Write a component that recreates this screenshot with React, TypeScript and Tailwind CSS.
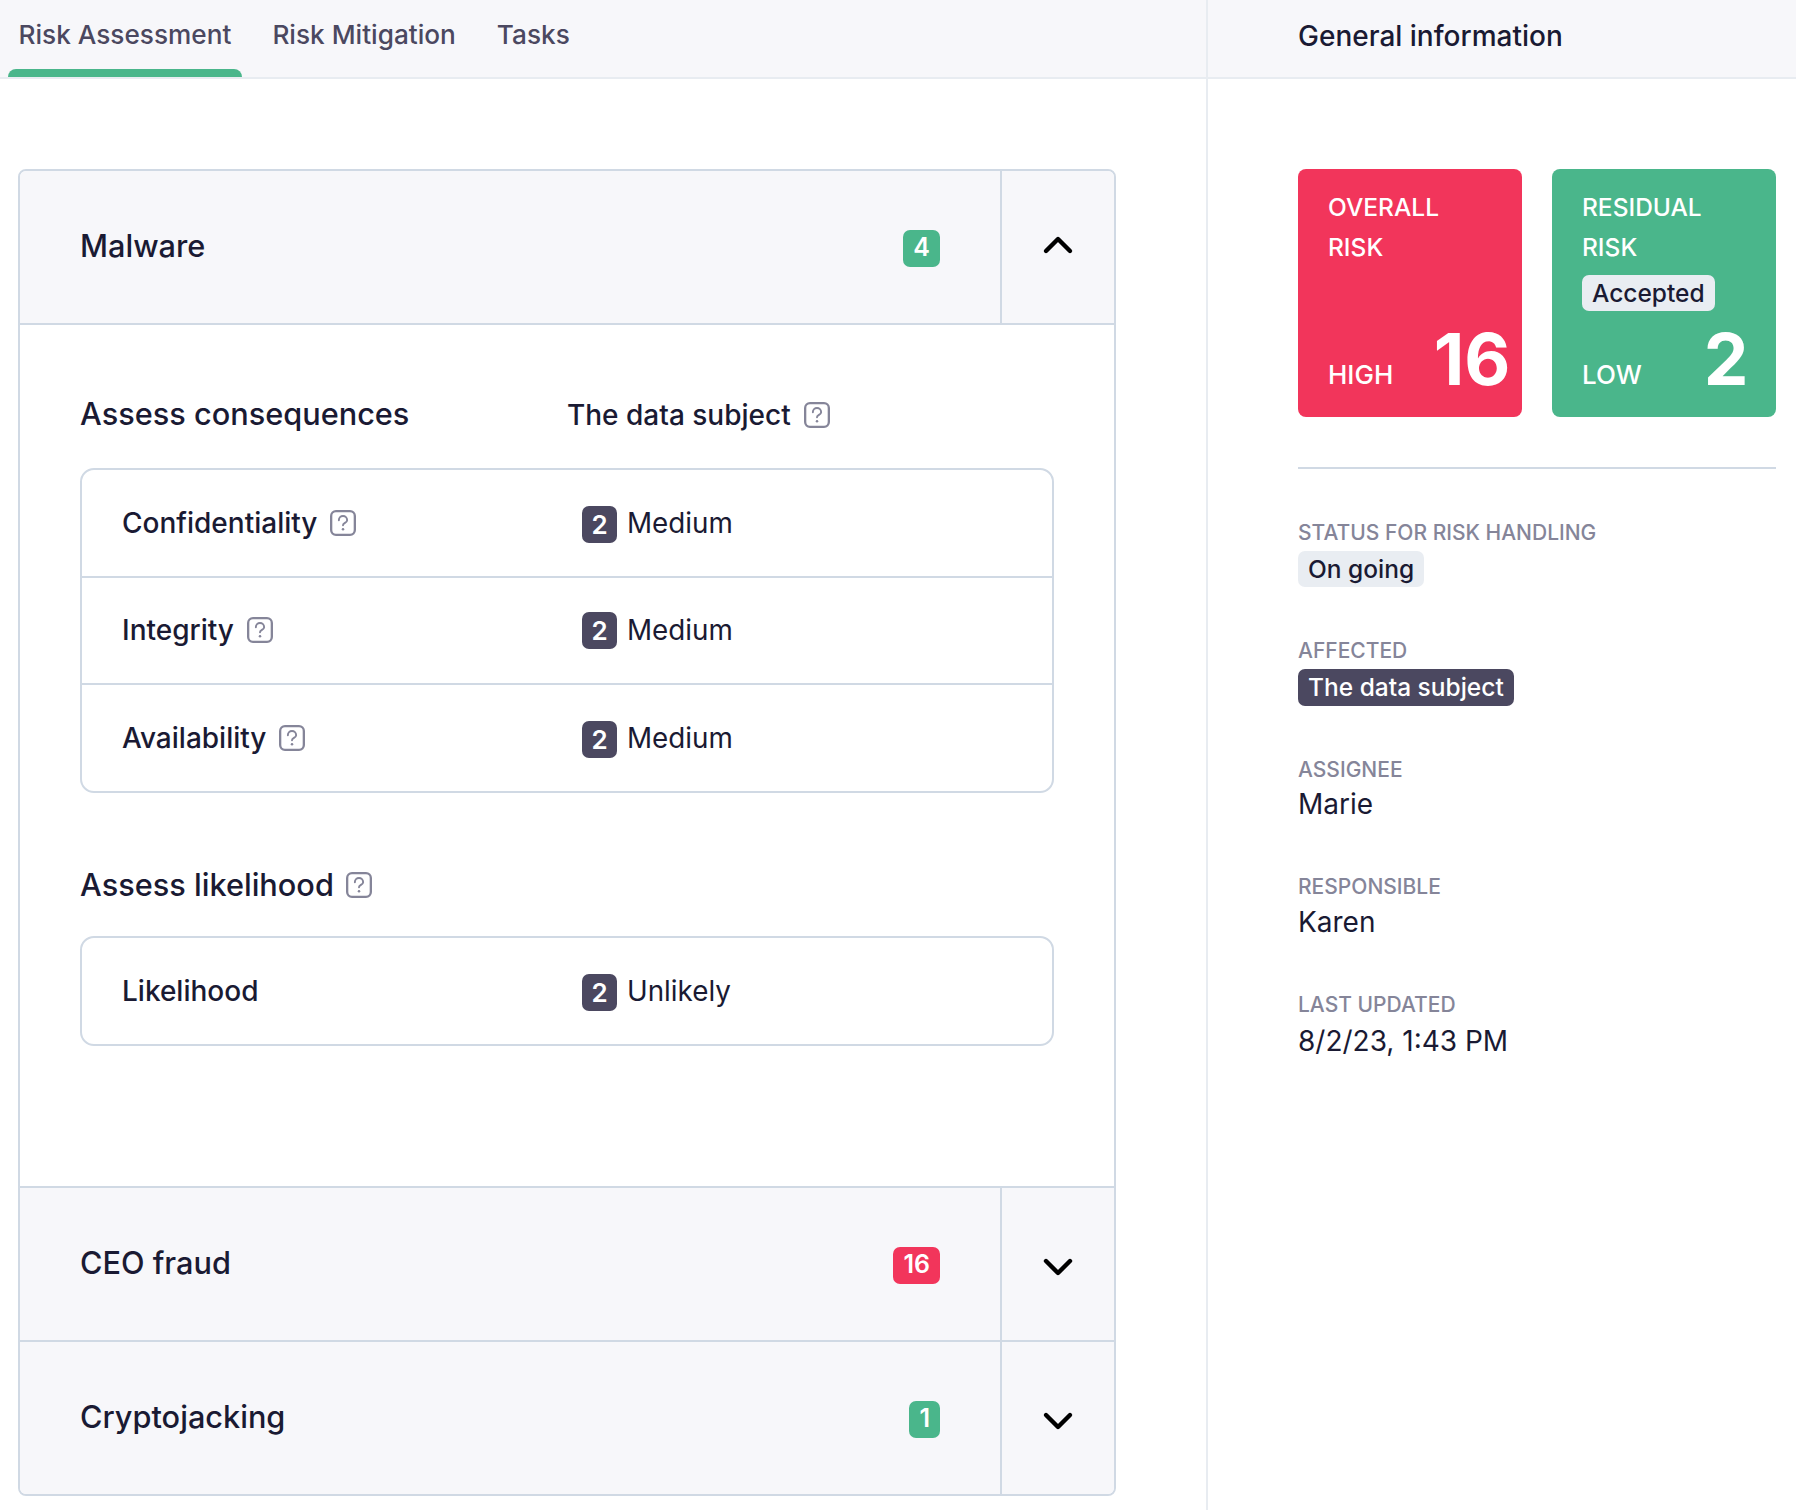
import { ChevronDown, ChevronUp } from "lucide-react";

const HelpIcon = () => (
  <svg width="26" height="26" viewBox="0 0 27 27" fill="none" className="shrink-0">
    <rect x="1.2" y="1.2" width="24.6" height="24.6" rx="5" stroke="#858599" strokeWidth="2.4" />
    <path d="M9.2 10.6a4.3 4.3 0 0 1 8.6 0c0 2.7-4.3 2.9-4.3 5.2" stroke="#858599" strokeWidth="2" strokeLinecap="round" />
    <circle cx="13.5" cy="20" r="1.3" fill="#858599" />
  </svg>
);

const LevelRow = ({ label, level, text, help, className }: { label: string; level: number; text: string; help?: boolean; className: string }) => (
  <div className={`flex items-center pl-[40px] ${className}`}>
    <div className="w-[460px] flex items-center gap-[13px] text-[28px] font-medium text-[#1a1a33] -mt-[2px]">
      {label}
      {help && <HelpIcon />}
    </div>
    <div className="flex items-center gap-[10px] text-[27.8px] text-[#1a1a33]">
      <span className="w-[35px] h-[37px] rounded-[7px] bg-[#4b4860] text-white font-semibold flex items-center justify-center text-[26px]">{level}</span>
      {text}
    </div>
  </div>
);

const AccordionHead = ({ title, count, tone, open, className }: { title: string; count: number; tone: string; open?: boolean; className: string }) => (
  <div className={`flex bg-[#f7f7fa] border-[#d0d9e4] ${className}`}>
    <div className="flex-1 flex items-center justify-between pl-[60px] pr-[60px]">
      <span className="text-[30.7px] font-medium text-[#1a1a33] -mt-[2px]">{title}</span>
      <span className={`mt-[2px] h-[37px] px-[10px] rounded-[7px] text-white font-semibold text-[25px] flex items-center ${tone}`}>{count}</span>
    </div>
    <div className="w-[114px] border-l-2 border-[#d0d9e4] flex items-center justify-center text-black">
      {open ? <ChevronUp size={48} strokeWidth={2.2} className="-mt-[5px]" /> : <ChevronDown size={48} strokeWidth={2.2} className="mt-[5px]" />}
    </div>
  </div>
);

const RiskCard = ({ title, level, score, tone, pill }: { title: string; level: string; score: number; tone: string; pill?: string }) => (
  <div className={`w-[224px] h-[248px] rounded-[8px] pl-[30px] text-white flex flex-col font-medium ${tone}`}>
    <div className="pt-[18px] leading-[40px] text-[24.5px]">
      {title}
      <br />
      RISK
    </div>
    {pill && (
      <span className="self-start mt-[8px] h-[36px] px-[10px] rounded-[7px] bg-[#e9edf2] text-[#1a1a33] text-[24.5px] flex items-center">{pill}</span>
    )}
    <div className="mt-auto flex items-end pb-[22px]">
      <span className="w-[100px] leading-[40px] text-[26px]">{level}</span>
      <span className="w-[88px] text-center text-[71px] font-bold leading-[72px]">{score}</span>
    </div>
  </div>
);

const Info = ({ label, children }: { label: string; children: React.ReactNode }) => (
  <div className="flex flex-col items-start">
    <div className="text-[21px] font-medium text-[#858599] leading-[28px] uppercase">{label}</div>
    {children}
  </div>
);

export default function App() {
  return (
    <div className="w-[1796px] h-[1510px] bg-white flex font-['Inter',sans-serif]">
      <div className="w-[1206px] shrink-0 flex flex-col">
        <div className="h-[79px] bg-[#f7f7fa] border-b-2 border-[#e8ecf1] flex px-[8px] gap-[20px] text-[26.2px] font-medium text-[#4b4860]">
          <div className="flex flex-col">
            <div className="flex-1 flex items-center px-[10.5px]">Risk Assessment</div>
            <div className="h-[8px] rounded-t-[8px] bg-[#4ab68b]" />
          </div>
          <div className="flex flex-col">
            <div className="flex-1 flex items-center px-[10.5px]">Risk Mitigation</div>
            <div className="h-[8px]" />
          </div>
          <div className="flex flex-col">
            <div className="flex-1 flex items-center px-[10.5px]">Tasks</div>
            <div className="h-[8px]" />
          </div>
        </div>
        <div className="pt-[90px] pl-[18px]">
          <div className="w-[1098px] border-2 border-[#d0d9e4] rounded-[8px] overflow-hidden">
            <AccordionHead title="Malware" count={4} tone="bg-[#4ab68b]" open className="h-[154px] border-b-2" />
            <div className="px-[60px] pt-[66px] pb-[140px]">
              <div className="flex items-center h-[48px] mb-[29px]">
                <div className="w-[487px] text-[30.7px] font-medium text-[#1a1a33] -mt-[2px]">Assess consequences</div>
                <div className="flex items-center gap-[13px] text-[28px] font-medium text-[#1a1a33]">
                  The data subject
                  <HelpIcon />
                </div>
              </div>
              <div className="border-2 border-[#d0d9e4] rounded-[14px]">
                <LevelRow label="Confidentiality" level={2} text="Medium" help className="h-[108px] pt-[2px] border-b-2 border-[#d0d9e4]" />
                <LevelRow label="Integrity" level={2} text="Medium" help className="h-[107px] border-b-2 border-[#d0d9e4]" />
                <LevelRow label="Availability" level={2} text="Medium" help className="h-[106px] pt-[2px]" />
              </div>
              <div className="flex items-center gap-[12px] h-[48px] mt-[68px] mb-[27px] text-[30.7px] font-medium text-[#1a1a33]">
                Assess likelihood
                <HelpIcon />
              </div>
              <div className="border-2 border-[#d0d9e4] rounded-[14px]">
                <LevelRow label="Likelihood" level={2} text="Unlikely" className="h-[106px] pt-[2px]" />
              </div>
            </div>
            <AccordionHead title="CEO fraud" count={16} tone="bg-[#f2355b]" className="h-[154px] border-t-2" />
            <AccordionHead title="Cryptojacking" count={1} tone="bg-[#4ab68b]" className="h-[154px] border-t-2" />
          </div>
        </div>
      </div>
      <div className="flex-1 border-l-2 border-[#e8ecf1] flex flex-col">
        <div className="h-[79px] bg-[#f7f7fa] border-b-2 border-[#e8ecf1] pl-[90px] pb-[5px] flex items-center text-[28px] font-medium text-[#1a1a33]">
          General information
        </div>
        <div className="pl-[90px] pr-[20px] pt-[90px]">
          <div className="flex gap-[30px]">
            <RiskCard title="OVERALL" level="HIGH" score={16} tone="bg-[#f2355b]" />
            <RiskCard title="RESIDUAL" level="LOW" score={2} tone="bg-[#4ab68b]" pill="Accepted" />
          </div>
          <div className="h-[2px] bg-[#d0d9e4] mt-[50px] mb-[50px]" />
          <div className="flex flex-col gap-[48px] text-[28px] text-[#1a1a33]">
            <Info label="Status for risk handling">
              <span className="mt-[4px] mb-[2px] h-[36px] px-[10px] rounded-[7px] bg-[#e9edf2] font-medium text-[24.5px] flex items-center">On going</span>
            </Info>
            <Info label="Affected">
              <span className="mt-[4px] mb-[2px] h-[37px] px-[10px] rounded-[7px] bg-[#4b4860] text-white font-medium text-[24.5px] flex items-center">The data subject</span>
            </Info>
            <Info label="Assignee">
              <span className="mb-[1px] leading-[40px]">Marie</span>
            </Info>
            <Info label="Responsible">
              <span className="mt-[1px] mb-[1px] leading-[40px]">Karen</span>
            </Info>
            <Info label="Last updated">
              <span className="mt-[2px] leading-[40px]">8/2/23, 1:43 PM</span>
            </Info>
          </div>
        </div>
      </div>
    </div>
  );
}
